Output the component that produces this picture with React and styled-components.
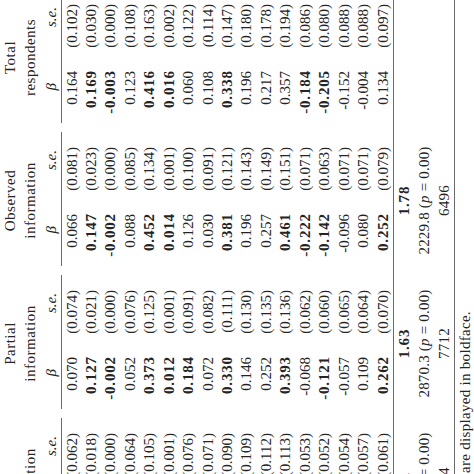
import React from 'react';
import styled, { createGlobalStyle } from 'styled-components';

const GlobalStyle = createGlobalStyle`
  html, body {
    margin: 0;
    padding: 0;
    background: #fff;
  }
  body {
    font-family: "Liberation Serif", "Times New Roman", serif;
    color: #242424;
  }
`;

const groups = [
    { top: 'Full', bottom: 'information', stat: '1.71', chi: '2954.1', n: '14204' },
    { top: 'Partial', bottom: 'information', stat: '1.63', chi: '2870.3', n: '7712' },
    { top: 'Observed', bottom: 'information', stat: '1.78', chi: '2229.8', n: '6496' },
    { top: 'Total', bottom: 'respondents' },
];

// b = beta, s = s.e. ; a leading * marks a significant (bold) coefficient
const rows = [
    ['', '0.062', '0.070', '0.074', '0.066', '0.081', '0.164', '0.102'],
    ['', '0.018', '*0.127', '0.021', '*0.147', '0.023', '*0.169', '0.030'],
    ['', '0.000', '*-0.002', '0.000', '*-0.002', '0.000', '*-0.003', '0.000'],
    ['', '0.064', '0.052', '0.076', '0.088', '0.085', '0.123', '0.108'],
    ['', '0.105', '*0.373', '0.125', '*0.452', '0.134', '*0.416', '0.163'],
    ['', '0.001', '*0.012', '0.001', '*0.014', '0.001', '*0.016', '0.002'],
    ['', '0.076', '*0.184', '0.091', '0.126', '0.100', '0.060', '0.122'],
    ['', '0.071', '0.072', '0.082', '0.030', '0.091', '0.108', '0.114'],
    ['', '0.090', '*0.330', '0.111', '*0.381', '0.121', '*0.338', '0.147'],
    ['', '0.109', '0.146', '0.130', '0.196', '0.143', '0.196', '0.180'],
    ['', '0.112', '0.252', '0.135', '0.257', '0.149', '0.217', '0.178'],
    ['', '0.113', '*0.393', '0.136', '*0.461', '0.151', '0.357', '0.194'],
    ['', '0.053', '-0.068', '0.062', '*-0.222', '0.071', '*-0.184', '0.086'],
    ['', '0.052', '*-0.121', '0.060', '*-0.142', '0.063', '*-0.205', '0.080'],
    ['', '0.054', '-0.057', '0.065', '-0.096', '0.071', '-0.152', '0.088'],
    ['', '0.057', '0.109', '0.064', '0.080', '0.071', '-0.004', '0.088'],
    ['', '0.061', '*0.262', '0.070', '*0.252', '0.079', '0.134', '0.097'],
];

export default function App() {
    return (
        <>
            <GlobalStyle />
            <Frame>
                <Turned>
                    <Sheet>
                        <Row $h={20}>
                            {groups.map((g) => <Head key={g.top}>{g.top}</Head>)}
                        </Row>
                        <Row $h={21}>
                            {groups.map((g) => <Head key={g.top}>{g.bottom}</Head>)}
                        </Row>
                        <Row $h={20}>
                            {groups.map((g) => (
                                <Pair key={g.top}>
                                    <Sym $pad={12}>β</Sym>
                                    <Sym $pad={3}>s.e.</Sym>
                                </Pair>
                            ))}
                        </Row>
                        <Row $h={1.5}>
                            {groups.map((g) => <Stroke key={g.top} />)}
                        </Row>

                        {rows.map((r, i) => (
                            <Row key={i} $h={19.45}>
                                {groups.map((g, gi) => {
                                    const b = r[gi * 2];
                                    const s = r[gi * 2 + 1];
                                    const bold = b.startsWith('*');
                                    return (
                                        <Pair key={g.top}>
                                            <Num $bold={bold}>{bold ? b.slice(1) : b}</Num>
                                            <Num>({s})</Num>
                                        </Pair>
                                    );
                                })}
                            </Row>
                        ))}

                        <Rule />
                        <Row $h={20}>
                            {groups.map((g) => <Span key={g.top} $bold>{g.stat}</Span>)}
                        </Row>
                        <Row $h={20}>
                            {groups.map((g) => (
                                <Span key={g.top}>
                                    {g.chi && <>{g.chi} (<i>p</i> = 0.00)</>}
                                </Span>
                            ))}
                        </Row>
                        <Row $h={20}>
                            {groups.map((g) => <Span key={g.top}>{g.n}</Span>)}
                        </Row>
                        <Rule />

                        <Note>
                            <Lead>Note: Significant coefficients</Lead>
                            are displayed in boldface.
                        </Note>
                    </Sheet>
                </Turned>
            </Frame>
        </>
    );
}

const Frame = styled.div`
    width: 474px;
    height: 474px;
    overflow: hidden;
    background: #fff;
`

// the scanned page is a landscape table lying on its side
const Turned = styled.div`
    width: 474px;
    height: 474px;
    overflow: hidden;
    transform: rotate(-90deg);
`

const Sheet = styled.div`
    width: 572px;
    margin-left: -84px;
    display: flex;
    flex-direction: column;
    font-size: 15px;
`

const Row = styled.div`
    display: flex;
    flex: none;
    height: ${(p) => p.$h}px;
    line-height: ${(p) => p.$h}px;
    white-space: nowrap;
`

const Head = styled.div`
    width: 143px;
    flex: none;
    text-align: center;
    letter-spacing: 0.5px;
`

const Pair = styled.div`
    width: 143px;
    flex: none;
    display: grid;
    grid-template-columns: 58px 67px;
`

const Sym = styled.span`
    font-style: italic;
    text-align: right;
    padding-right: ${(p) => p.$pad}px;
`

const Num = styled.span`
    text-align: right;
    font-weight: ${(p) => (p.$bold ? 700 : 400)};
    letter-spacing: ${(p) => (p.$bold ? '0.8px' : '0')};
    margin-right: ${(p) => (p.$bold ? '-0.8px' : '0')};
`

const Span = styled.div`
    width: 143px;
    flex: none;
    text-align: center;
    font-weight: ${(p) => (p.$bold ? 700 : 400)};
    letter-spacing: ${(p) => (p.$bold ? '0.8px' : '0.2px')};
`

const Stroke = styled.div`
    width: 143px;
    flex: none;
    box-sizing: border-box;
    padding: 0 3px 0 6px;

    &::before {
        content: '';
        display: block;
        border-top: 1.5px solid #6a6a6a;
    }
`

const Rule = styled.div`
    flex: none;
    width: 572px;
    border-top: 1.5px solid #6a6a6a;
`

const Note = styled.div`
    display: flex;
    flex: none;
    height: 21px;
    line-height: 21px;
    white-space: nowrap;
    letter-spacing: 0.3px;
`

const Lead = styled.span`
    width: 85px;
    flex: none;
    display: flex;
    justify-content: flex-end;
    padding-right: 4px;
    box-sizing: border-box;
`
